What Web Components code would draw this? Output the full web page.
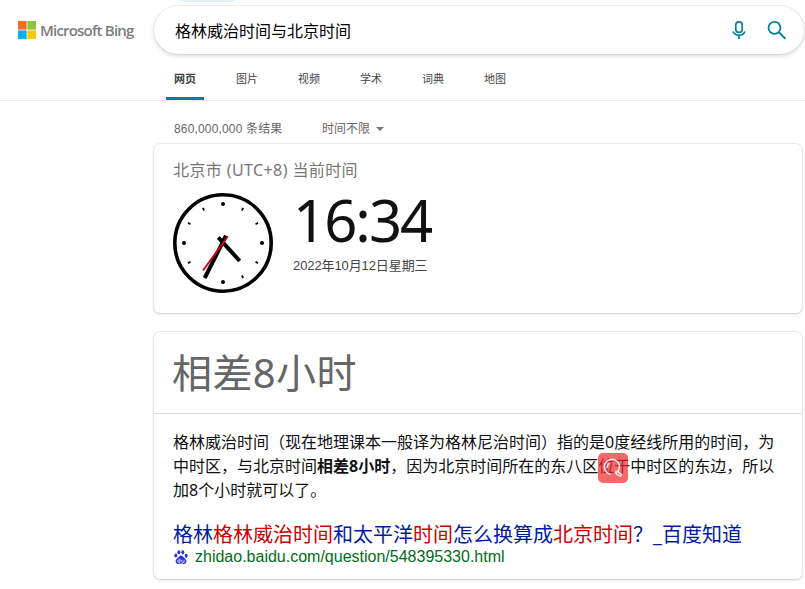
<!DOCTYPE html>
<html lang="zh-CN">
<head>
<meta charset="utf-8">
<title>格林威治时间与北京时间</title>
<style>
    html, body {
        margin: 0;
        height: 589px;
        overflow: hidden;
        background: #fff;
    }

    body {
        font-family: "Noto Sans", "Noto Sans CJK SC", sans-serif;
        color: #111;
    }
</style>
</head>
<body>
<bing-page>
    <bing-logo slot="logo"></bing-logo>
    <search-box slot="search" query="格林威治时间与北京时间"></search-box>
    <tab-list slot="tabs" items="网页,图片,视频,学术,词典,地图"></tab-list>
    <result-stats count="860,000,000 条结果" filter="时间不限"></result-stats>
    <result-card class="clock">
        <world-clock place="北京市 (UTC+8) 当前时间" time="16:34" date="2022年10月12日星期三"></world-clock>
    </result-card>
    <result-card class="answer">
        <answer-box></answer-box>
    </result-card>
</bing-page>

<script>
class BingPage extends HTMLElement {
    constructor() {
        super();
        this.attachShadow({ mode: 'open' });
        this.shadowRoot.innerHTML = `
            <style>
                :host { display: block; }

                header {
                    display: grid;
                    grid-template-columns: 153px 1fr;
                    grid-template-rows: 55px 45px;
                    border-bottom: 1px solid #ececec;
                    position: relative;
                }

                .peek {
                    position: absolute;
                    left: 178px;
                    top: -10px;
                    width: 59px;
                    height: 12px;
                    border-radius: 6px;
                    background: #e3f1f4;
                }

                .tabs { grid-column: 2; }

                main {
                    display: flex;
                    flex-direction: column;
                    margin-left: 153px;
                    width: 650px;
                }
            </style>
            <header>
                <div class="peek"></div>
                <slot name="logo"></slot>
                <slot name="search"></slot>
                <div class="tabs"><slot name="tabs"></slot></div>
            </header>
            <main><slot></slot></main>
        `;
    }
}

class BingLogo extends HTMLElement {
    constructor() {
        super();
        this.attachShadow({ mode: 'open' });
        this.shadowRoot.innerHTML = `
            <style>
                :host {
                    display: flex;
                    align-items: center;
                    gap: 4px;
                    height: 20px;
                    margin: 20px 0 0 18px;
                    font: 600 15px/20px "Open Sans", sans-serif;
                    letter-spacing: -0.8px;
                    color: #7c7c7c;
                    white-space: nowrap;
                }

                svg { display: block; flex: none; }
            </style>
            <svg width="18" height="18" viewBox="0 0 18 18">
                <rect width="8.6" height="8.6" fill="#f26b2b"/>
                <rect x="9.4" width="8.6" height="8.6" fill="#8dc63f"/>
                <rect y="9.4" width="8.6" height="8.6" fill="#00adef"/>
                <rect x="9.4" y="9.4" width="8.6" height="8.6" fill="#fdc60b"/>
            </svg>
            <span>Microsoft Bing</span>
        `;
    }
}

class SearchBox extends HTMLElement {
    constructor() {
        super();
        this.attachShadow({ mode: 'open' });
    }

    connectedCallback() {
        this.shadowRoot.innerHTML = `
            <style>
                :host {
                    display: flex;
                    align-items: center;
                    box-sizing: border-box;
                    width: 650px;
                    height: 48px;
                    margin: 6px 0 0 1px;
                    padding: 0 17px 0 21px;
                    border-radius: 24px;
                    background: #fff;
                    box-shadow: 0 0 0 1px rgba(0,0,0,0.06), 0 2px 4px 0 rgba(0,0,0,0.14);
                }

                .query {
                    flex: 1;
                    padding-top: 2px;
                    font-size: 16px;
                    line-height: 24px;
                    color: #000;
                }

                svg { display: block; }
                .mic { margin-right: 21px; }
            </style>
            <span class="query">${this.getAttribute('query')}</span>
            <svg class="mic" width="14" height="20" viewBox="0 0 14 20" fill="none" stroke="#00809d" stroke-width="1.7">
                <rect x="3.8" y="1.8" width="6.4" height="10.6" rx="3.2"/>
                <path d="M1 11.5c1 2.4 3.2 3.7 6 3.7s5-1.3 6-3.7M7 15v4" stroke-width="1.8"/>
            </svg>
            <svg width="20" height="20" viewBox="0 0 20 20" fill="none" stroke="#00809d" stroke-width="1.8">
                <circle cx="7.5" cy="7.8" r="6"/>
                <path d="M11.7 12l6.8 6.8"/>
            </svg>
        `;
    }
}

class TabList extends HTMLElement {
    constructor() {
        super();
        this.attachShadow({ mode: 'open' });
    }

    connectedCallback() {
        const items = this.getAttribute('items').split(',');

        this.shadowRoot.innerHTML = `
            <style>
                :host {
                    display: flex;
                    gap: 24px;
                    height: 45px;
                    padding-left: 13px;
                }

                .tab {
                    box-sizing: border-box;
                    width: 38px;
                    height: 45px;
                    padding-top: 14px;
                    text-align: center;
                    font-size: 11px;
                    line-height: 20px;
                    color: #444;
                    border-bottom: 3px solid transparent;
                }

                .tab.active {
                    font-weight: 700;
                    border-color: #00809d;
                }
            </style>
            ${items.map((item, i) => `<div class="tab${i === 0 ? ' active' : ''}">${item}</div>`).join('')}
        `;
    }
}

class ResultStats extends HTMLElement {
    constructor() {
        super();
        this.attachShadow({ mode: 'open' });
    }

    connectedCallback() {
        this.shadowRoot.innerHTML = `
            <style>
                :host {
                    display: flex;
                    align-items: center;
                    height: 20px;
                    padding: 18px 0 4px 21px;
                    font: 12px/20px "Liberation Sans", "Noto Sans CJK SC", sans-serif;
                    color: #666;
                }

                .count { width: 148px; letter-spacing: 0.16px; }

                .arrow {
                    margin: 0 0 1px 6px;
                    border: 4px solid transparent;
                    border-top-color: #767676;
                    border-bottom: 0;
                }
            </style>
            <span class="count">${this.getAttribute('count')}</span>
            <span>${this.getAttribute('filter')}</span>
            <span class="arrow"></span>
        `;
    }
}

class ResultCard extends HTMLElement {
    constructor() {
        super();
        this.attachShadow({ mode: 'open' });
        this.shadowRoot.innerHTML = `
            <style>
                :host {
                    display: block;
                    box-sizing: border-box;
                    margin: 1px 1px 18px;
                    border-radius: 6px;
                    background: #fff;
                    box-shadow: 0 0 0 1px rgba(0,0,0,0.06), 0 1px 3px 0 rgba(0,0,0,0.14);
                }

                :host(.clock) { height: 169px; }
                :host(.answer) { height: 247px; margin-top: 1px; }
            </style>
            <slot></slot>
        `;
    }
}

class WorldClock extends HTMLElement {
    constructor() {
        super();
        this.attachShadow({ mode: 'open' });
    }

    connectedCallback() {
        this.shadowRoot.innerHTML = `
            <style>
                :host { display: block; padding: 14px 19px; }

                .place {
                    font-size: 16px;
                    line-height: 24px;
                    letter-spacing: 0.4px;
                    color: #767676;
                }

                .row { display: flex; gap: 20px; margin-top: 11px; }
                svg { display: block; }

                .time {
                    height: 60px;
                    font-size: 58px;
                    line-height: 54px;
                    letter-spacing: -2px;
                    color: #111;
                }

                .date {
                    margin-top: 3px;
                    font: 13px/20px "Liberation Sans", "Noto Sans CJK SC", sans-serif;
                    letter-spacing: -0.1px;
                    color: #444;
                }
            </style>
            <div class="place">${this.getAttribute('place')}</div>
            <div class="row">
                <svg width="100" height="100" viewBox="-50 -50 100 100">
                    <circle r="48.2" fill="#fff" stroke="#000" stroke-width="3.6"/>
                    ${this.ticks()}
                    <path d="M-4.7-5.7L16.7 18M3-7.3L-18.3 35" stroke="#000" stroke-width="4"/>
                    <path d="M4.8-6.5L-20 27.5" stroke="#d0021b" stroke-width="1.9"/>
                </svg>
                <div>
                    <div class="time">${this.getAttribute('time')}</div>
                    <div class="date">${this.getAttribute('date')}</div>
                </div>
            </div>
        `;
    }

    // round dots on the quarters, short dashes elsewhere
    ticks() {
        let out = '';
        for (let i = 0; i < 12; i++) {
            // the hour 7 mark is hidden by the minute hand
            if (i === 7) continue;
            out += i % 3 === 0
                ? `<circle cy="-39" r="2" transform="rotate(${i * 30})"/>`
                : `<rect x="-0.9" y="-40.4" width="1.8" height="2.8" transform="rotate(${i * 30})"/>`;
        }
        return out;
    }
}

class AnswerBox extends HTMLElement {
    constructor() {
        super();
        this.attachShadow({ mode: 'open' });
        this.shadowRoot.innerHTML = `
            <style>
                :host { display: block; position: relative; }

                .headline {
                    height: 81px;
                    padding-left: 18px;
                    font-size: 40px;
                    line-height: 81px;
                    letter-spacing: 0.4px;
                    color: #666;
                    border-bottom: 1px solid #dcdcdc;
                }

                p {
                    margin: 16px 0 0 19px;
                    font-size: 16px;
                    line-height: 24px;
                    white-space: nowrap;
                }

                .title {
                    margin: 19px 0 0 19px;
                    font-size: 20px;
                    line-height: 28px;
                    color: #001ba0;
                    white-space: nowrap;
                }

                .title em { font-style: normal; color: #c00; }

                .source {
                    display: flex;
                    align-items: center;
                    gap: 7px;
                    margin: -2px 0 0 20px;
                    font: 16px/20px "Liberation Sans", sans-serif;
                    color: #006d21;
                }

                .source svg { margin-bottom: 1px; }

                .lens {
                    position: absolute;
                    left: 444px;
                    top: 121px;
                    width: 30px;
                    height: 30px;
                    border-radius: 5px;
                    background: rgba(240,40,45,0.7);
                }

                svg { display: block; }
            </style>
            <div class="headline">相差8小时</div>
            <p>格林威治时间（现在地理课本一般译为格林尼治时间）指的是0度经线所用的时间，为<br>中时区，与北京时间<b>相差8小时</b>，因为北京时间所在的东八区位于中时区的东边，所以<br>加8个小时就可以了。</p>
            <div class="title">格林<em>格林威治时间</em>和太平洋<em>时间</em>怎么换算成<em>北京时间</em>？_百度知道</div>
            <div class="source">
                <svg width="14" height="14" viewBox="0 0 14 14" fill="#2a32dc">
                    <ellipse cx="1.8" cy="5.6" rx="1.5" ry="2"/>
                    <ellipse cx="4.9" cy="2.3" rx="1.5" ry="2.1"/>
                    <ellipse cx="8.8" cy="2.3" rx="1.5" ry="2.1"/>
                    <ellipse cx="12.2" cy="5.8" rx="1.5" ry="2"/>
                    <path d="M7 5.4c1.7 0 2.3 1.6 3.4 2.7 1.3 1.2 2.2 2 2 3.7-.2 1.5-1.4 2.2-2.9 2.1-1-.1-1.6-.3-2.5-.3s-1.6.2-2.6.3c-1.5.1-2.7-.7-2.8-2.3-.1-1.6.9-2.4 2.1-3.6C4.8 6.9 5.4 5.4 7 5.4z"/>
                    <path d="M5.9 8.5v3.8H4.5c-1.3 0-1.3-2.2 0-2.2h1.4M7.8 9.8v1.7c0 .6.2.8.8.8h1.5V9.8" fill="none" stroke="#fff" stroke-width=".8"/>
                </svg>
                <span>zhidao.baidu.com/question/548395330.html</span>
            </div>
            <div class="lens">
                <svg width="30" height="30" viewBox="0 0 30 30" fill="none" stroke="#fff" stroke-opacity=".85" stroke-linecap="round">
                    <path d="M12 21.3A7.6 7.6 0 1 1 20.2 18.2M9 14.5a5 5 0 0 1 2.2-4" stroke-width="1.5"/>
                    <path d="M18.8 19.5l3.4 2.4" stroke-width="4"/>
                    <path d="M19.6 20.2l2.2 1.5" stroke="#f26a6a" stroke-width="1.3"/>
                </svg>
            </div>
        `;
    }
}

customElements.define('bing-page', BingPage);
customElements.define('bing-logo', BingLogo);
customElements.define('search-box', SearchBox);
customElements.define('tab-list', TabList);
customElements.define('result-stats', ResultStats);
customElements.define('result-card', ResultCard);
customElements.define('world-clock', WorldClock);
customElements.define('answer-box', AnswerBox);
</script>
</body>
</html>
